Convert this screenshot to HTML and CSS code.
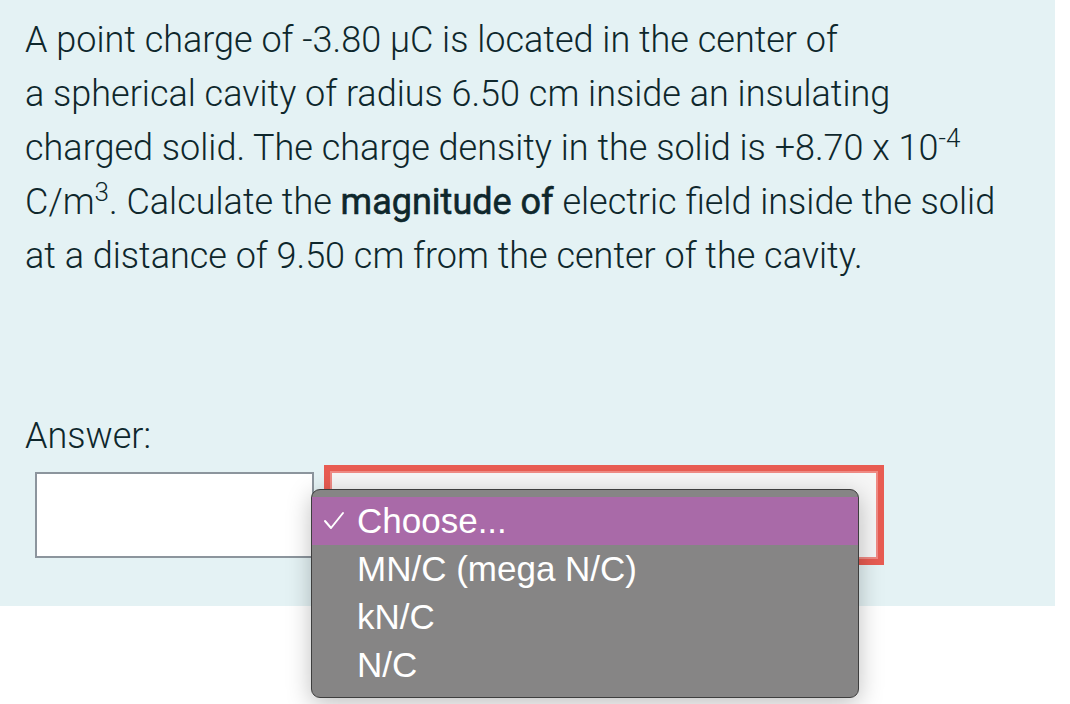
FILE: index.html
```html
<!DOCTYPE html>
<html lang="en">
<head>
    <meta charset="UTF-8">
    <title>Question</title>
    <link rel="stylesheet" href="styles.css">
</head>
<body>
    <div class="que">
        <!-- Enunciado -->
        <p class="qtext">
            A point charge of -3.80 μC is located in the center of<br>
            a spherical cavity of radius 6.50 cm inside an insulating<br>
            charged solid. The charge density in the solid is +8.70 x 10<sup>-4</sup><br>
            C/m<sup>3</sup>. Calculate the <b>magnitude of</b> electric field inside the solid<br>
            at a distance of 9.50 cm from the center of the cavity.
        </p>

        <!-- Respuesta -->
        <div class="ablock">
            <label class="answer-label">Answer:</label>
            <div class="answer-row">
                <input type="text" class="answer-input">
                <div class="unit-select">
                    <div class="unit-inner"></div>
                    <!-- Menú desplegado -->
                    <ul class="unit-menu">
                        <li class="selected">
                            <svg class="check" width="22" height="20" viewBox="0 0 22 20">
                                <polyline points="2,10 8,17 20,2" fill="none" stroke="#fff" stroke-width="2" stroke-linecap="round" stroke-linejoin="round"/>
                            </svg>Choose...
                        </li>
                        <li>MN/C (mega N/C)</li>
                        <li>kN/C</li>
                        <li>N/C</li>
                    </ul>
                </div>
            </div>
        </div>
    </div>
</body>
</html>
```

FILE: styles.css
```css
html, body {
    min-height: 704px;
}
body {
    margin: 0;
    padding: 0;
    background-color: #ffffff;
    font-family: "Roboto Light", Roboto, "Liberation Sans", sans-serif;
}

/* Bloque de la pregunta */
.que {
    width: 1030px;
    height: 606px;
    padding-left: 25px;
    background-color: #e4f2f4;
    color: #0e272c;
}

.qtext {
    margin: 0;
    padding-top: 13px;
    font-size: 36px;
    font-weight: 300;
    line-height: 54px;
}
.qtext b {
    font-family: Roboto, sans-serif;
    font-weight: 400;
    -webkit-text-stroke: 0.6px #0e272c;
}
.qtext sup {
    font-size: 26px;
    line-height: 0;
    vertical-align: 13px;
}

/* Respuesta */
.ablock {
    margin-top: 133px;
}
.answer-label {
    display: block;
    font-size: 36px;
    font-weight: 300;
    line-height: 40px;
}
.answer-row {
    display: flex;
    align-items: center;
    margin-top: 9px;
    margin-left: 10px;
}
.answer-input {
    box-sizing: border-box;
    width: 279px;
    height: 86px;
    margin: 0;
    border: 2px solid #8c959d;
    background: #ffffff;
    border-radius: 0;
}
.unit-select {
    position: relative;
    z-index: 5;
    box-sizing: border-box;
    width: 560px;
    height: 100px;
    margin-left: 10px;
    border: 6px solid #e85c52;
    background: #ef8a84;
    padding: 2px;
}
.unit-inner {
    width: 100%;
    height: 100%;
    background: #f6f6f6;
}

/* Menú desplegado */
.unit-menu {
    position: absolute;
    z-index: 10;
    left: -19px;
    top: 18px;
    width: 546px;
    margin: 0;
    padding: 7px 0 8px;
    list-style: none;
    background-color: #868585;
    border: 1px solid #3e3e3e;
    border-radius: 9px;
    box-shadow: 0 6px 24px rgba(0, 0, 0, 0.25);
    font-family: "Liberation Sans", Arial, sans-serif;
    font-size: 35px;
    color: #ffffff;
}
.unit-menu li {
    height: 48px;
    line-height: 48px;
    padding-left: 45px;
    position: relative;
}
.unit-menu li.selected {
    background-color: #a96aa8;
}
.check {
    position: absolute;
    left: 11px;
    top: 14px;
}
```
